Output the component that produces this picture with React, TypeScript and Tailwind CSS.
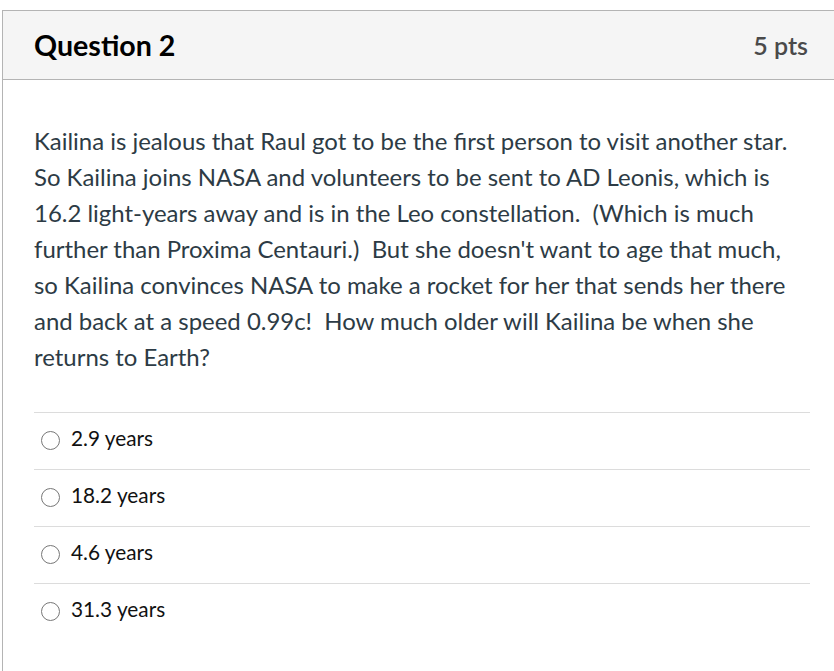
const answers = ["2.9 years", "18.2 years", "4.6 years", "31.3 years"];

const lines = [
  "Kailina is jealous that Raul got to be the first person to visit another star.",
  "So Kailina joins NASA and volunteers to be sent to AD Leonis, which is",
  "16.2 light-years away and is in the Leo constellation.\u00a0 (Which is much",
  "further than Proxima Centauri.)\u00a0 But she doesn't want to age that much,",
  "so Kailina convinces NASA to make a rocket for her that sends her there",
  "and back at a speed 0.99c!\u00a0 How much older will Kailina be when she",
  "returns to Earth?",
];

export default function App() {
  return (
    <div className="w-full h-[671px] overflow-hidden bg-white font-['Lato',sans-serif]">
      <div className="ml-[2px] mt-[10px] w-[840px] h-[700px] border border-[#b4b4b4]">
        {/* Header */}
        <div className="h-[69px] bg-[#f5f5f5] border-b border-[#b4b4b4] flex items-center justify-between pl-[31px] pr-[33px]">
          <h2 className="text-[28.6px] font-bold text-black leading-none">Question 2</h2>
          <span className="text-[25px] font-semibold text-[#4a4a4a] leading-none">5 pts</span>
        </div>

        {/* Body */}
        <div className="pl-[31px] pr-[30px] pt-[43px]">
          <p className="text-[23.95px] leading-[36px] text-[#2d3b45] whitespace-nowrap">
            {lines.map((l, i) => (
              <span key={i} className="block">
                {l}
              </span>
            ))}
          </p>

          <div className="mt-[37px] w-[776px]">
            {answers.map((a) => (
              <div
                key={a}
                className="border-t border-[#dcdcdc] h-[57px] flex items-center pb-[7px]"
              >
                <span className="ml-[7px] mt-[6px] w-[19px] h-[19px] rounded-full border-[1.5px] border-[#777] bg-white" />
                <span className="ml-[11px] text-[20.8px] text-[#111]">{a}</span>
              </div>
            ))}
          </div>
        </div>
      </div>
    </div>
  );
}
